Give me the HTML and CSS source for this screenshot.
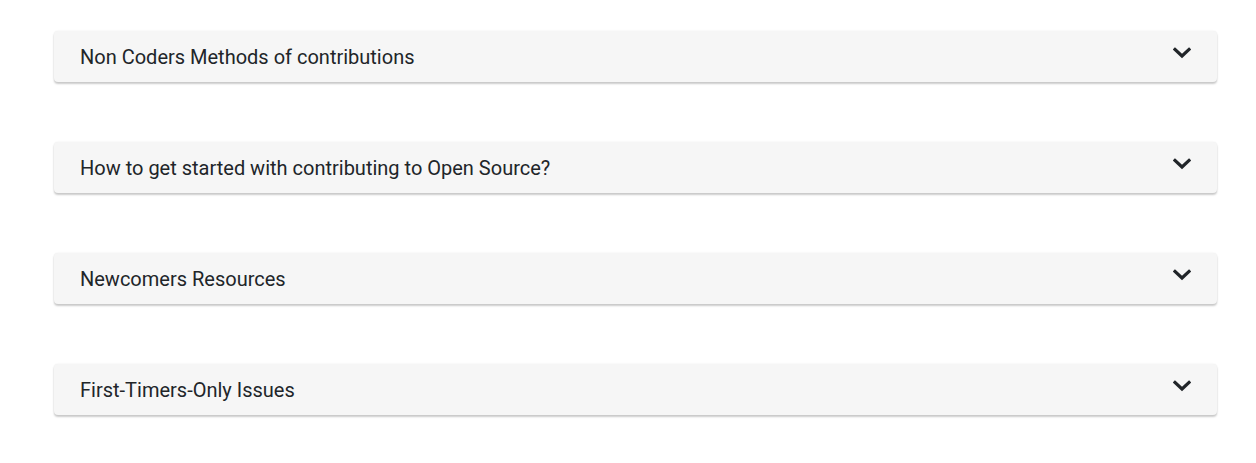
FILE: index.html
```html
<!DOCTYPE html>
<html lang="en">
<head>
  <meta charset="UTF-8">
  <title>Contributing FAQ</title>
  <link rel="stylesheet" href="styles.css">
</head>
<body>
  <div class="faq">
    <div class="faq-item">
      <span class="faq-title">Non Coders Methods of contributions</span>
      <svg class="chevron" viewBox="0 0 18 12" width="18" height="12"><path d="M2 2.5 L9 9 L16 2.5" /></svg>
    </div>
    <div class="faq-item">
      <span class="faq-title">How to get started with contributing to Open Source?</span>
      <svg class="chevron" viewBox="0 0 18 12" width="18" height="12"><path d="M2 2.5 L9 9 L16 2.5" /></svg>
    </div>
    <div class="faq-item">
      <span class="faq-title">Newcomers Resources</span>
      <svg class="chevron" viewBox="0 0 18 12" width="18" height="12"><path d="M2 2.5 L9 9 L16 2.5" /></svg>
    </div>
    <div class="faq-item">
      <span class="faq-title">First-Timers-Only Issues</span>
      <svg class="chevron" viewBox="0 0 18 12" width="18" height="12"><path d="M2 2.5 L9 9 L16 2.5" /></svg>
    </div>
  </div>
</body>
</html>
```

FILE: styles.css
```css
body {
  margin: 0;
  background: #fff;
  font-family: Roboto, "Liberation Sans", Arial, sans-serif;
}
.faq {
  display: flex;
  flex-direction: column;
  gap: 60px;
  padding: 31px 39px 40px 54px;
}
.faq-item {
  display: flex;
  align-items: center;
  justify-content: space-between;
  height: 51px;
  padding: 0 26px 0 26px;
  background: #f6f6f6;
  border-radius: 4px;
  box-shadow: 0 2px 2px rgba(0, 0, 0, 0.2), 0 0 2px rgba(0, 0, 0, 0.08);
  cursor: pointer;
}
.faq-title {
  font-size: 20px;
  color: #212529;
  margin-top: 1px;
}
.chevron {
  fill: none;
  stroke: #212529;
  stroke-width: 3.2;
  stroke-linecap: square;
  margin-top: -7px;
}
```
